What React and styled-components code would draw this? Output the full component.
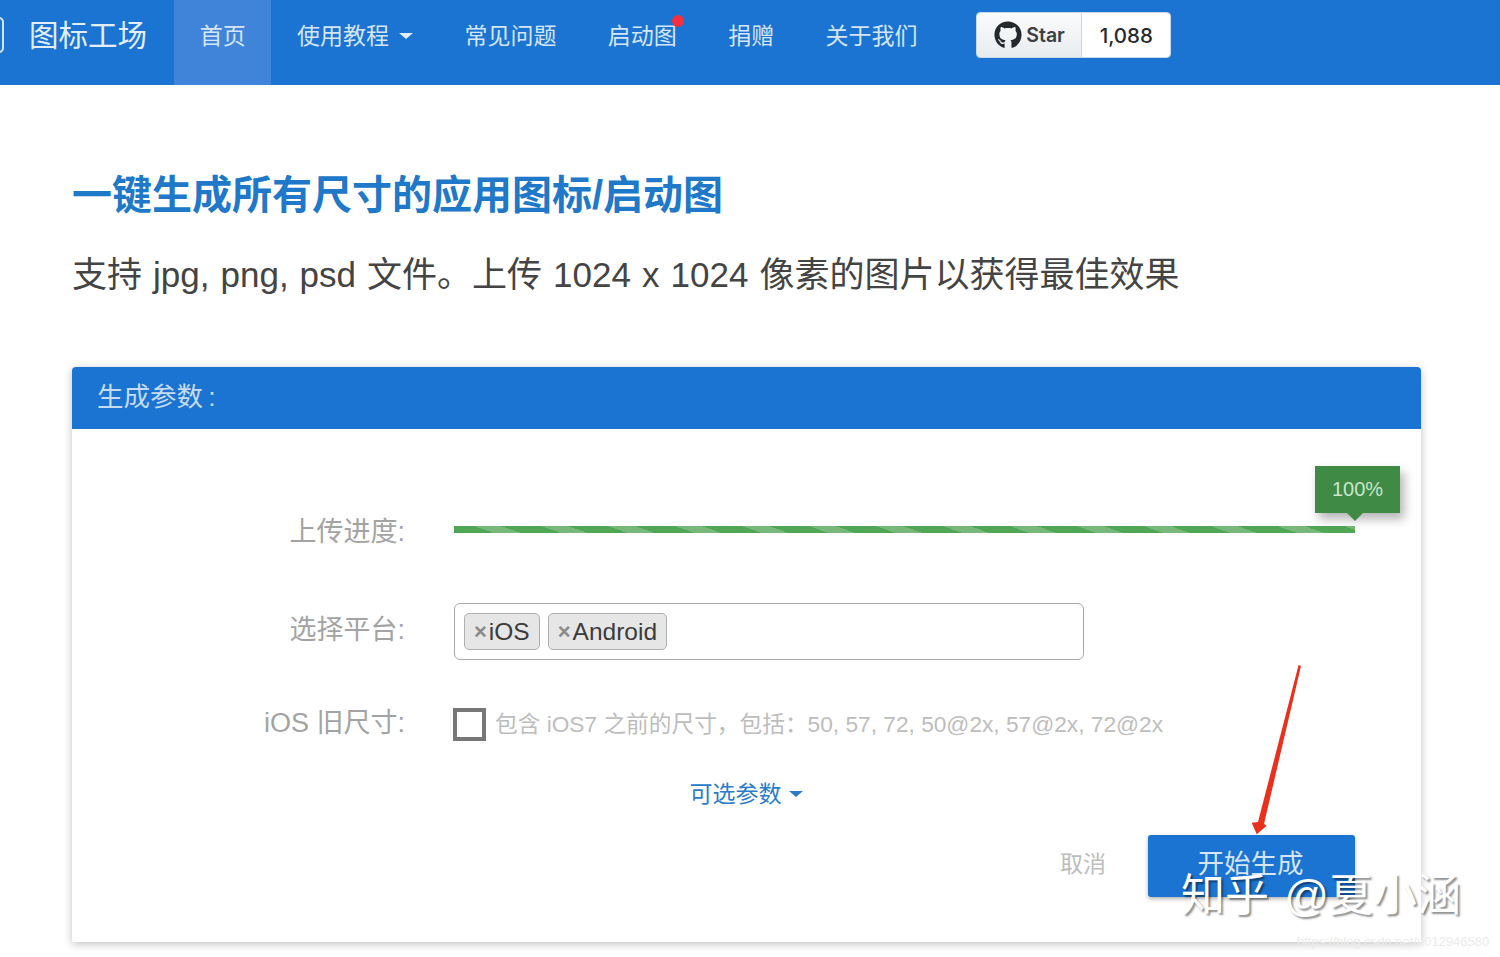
import React from 'react';
import styled, { createGlobalStyle } from 'styled-components';
import { FaGithub } from 'react-icons/fa';

const BLUE = '#1b74d1';
const FONT = '"Liberation Sans", "Noto Sans CJK SC", sans-serif';

const GlobalStyle = createGlobalStyle`
  html, body {
    margin: 0;
    padding: 0;
    background: #fff;
    font-family: ${FONT};
  }
`;

const Page = styled.div`
  position: relative;
  width: 1500px;
  height: 957px;
  overflow: hidden;
  background: #fff;
`;

const Navbar = styled.header`
  display: flex;
  align-items: stretch;
  height: 85px;
  background: ${BLUE};
  color: #d5e5f7;
`;

const BrandIcon = styled.span`
  align-self: center;
  width: 30px;
  height: 36px;
  margin: -16px 4px 0 -26px;
  box-sizing: border-box;
  border: 2px solid #d5e5f7;
  border-radius: 5px;
`;

const Brand = styled.div`
  display: flex;
  align-items: center;
  height: 70px;
  margin-right: 27px;
  margin-left: 21px;
  padding-bottom: 4px;
  box-sizing: border-box;
  font-size: 29.5px;
  color: #e3eefa;
`;

const NavItem = styled.a`
  position: relative;
  display: flex;
  align-items: center;
  height: 85px;
  padding: 0 25.7px 17px;
  box-sizing: border-box;
  font-size: 23px;
  background: ${(p) => (p.$active ? '#3f84d9' : 'transparent')};
`;

const Caret = styled.i`
  display: inline-block;
  width: 0;
  height: 0;
  margin-left: ${(p) => p.$gap || 10}px;
  margin-top: 3px;
  border-left: 7px solid transparent;
  border-right: 7px solid transparent;
  border-top: 6px solid ${(p) => p.$color || '#e3eefa'};
`;

const RedDot = styled.span`
  position: absolute;
  top: 15px;
  right: 19px;
  width: 12px;
  height: 12px;
  border-radius: 50%;
  background: #f5303f;
`;

const StarGroup = styled.div`
  display: flex;
  align-self: flex-start;
  height: 46px;
  margin: 12px 0 0 33px;
  box-sizing: border-box;
  border-radius: 4px;
  overflow: hidden;
  border: 1px solid #c9d9ec;
  font-family: Inter, "Liberation Sans", sans-serif;
  font-size: 20.5px;
  color: #24292e;
`;

const StarButton = styled.div`
  display: flex;
  align-items: center;
  gap: 4px;
  width: 105px;
  padding-left: 17px;
  box-sizing: border-box;
  font-weight: 600;
  font-size: 19.5px;
  color: #3a4046;
  background: linear-gradient(#fafbfc, #e9ecef);
  border-right: 1px solid #d0d4d9;
`;

const StarCount = styled.div`
  display: flex;
  align-items: center;
  justify-content: center;
  flex: none;
  width: 88px;
  background: #fff;
  font-weight: 500;
`;

const Main = styled.main`
  padding: 86px 79px 0 72px;
`;

const Title = styled.h1`
  margin: 0;
  font-size: 40px;
  line-height: 48px;
  font-weight: 700;
  color: #2078c8;
`;

const Subtitle = styled.p`
  margin: 34px 0 0;
  font-size: 35px;
  word-spacing: 1.3px;
  line-height: 44px;
  color: #444;
`;

const Card = styled.section`
  margin-top: 70px;
  border-radius: 4px 4px 0 0;
  background: #fff;
  box-shadow: 0 2px 8px rgba(0, 0, 0, 0.25);
`;

const CardHeader = styled.div`
  display: flex;
  align-items: center;
  height: 62px;
  padding: 0 0 8px 25px;
  box-sizing: border-box;
  border-radius: 4px 4px 0 0;
  background: ${BLUE};
  color: #c6dbf4;
  font-size: 26.5px;
  white-space: pre;
`;

const CardBody = styled.div`
  padding: 81px 66px 45px 0;
`;

const Row = styled.div`
  display: grid;
  grid-template-columns: 333px 1fr;
  column-gap: 49px;
  align-items: center;
  margin-top: ${(p) => p.$top || 0}px;
`;

const Label = styled.label`
  padding: ${(p) => p.$pad || '0 0 2px'};
  text-align: right;
  font-size: 27px;
  line-height: 29px;
  color: #a3a3a3;
`;

const Track = styled.div`
  position: relative;
  height: 7px;
  margin-bottom: 2px;
  background: repeating-linear-gradient(19deg, #4fa654 0 13px, #78b97b 13px 21.8px);
`;

const Tooltip = styled.div`
  position: absolute;
  right: -45px;
  bottom: 20px;
  display: flex;
  align-items: center;
  justify-content: center;
  width: 85px;
  height: 47px;
  background: #3f8a45;
  color: #c9e6ca;
  font-size: 20px;
  box-shadow: 4px 6px 10px rgba(0, 0, 0, 0.3);

  &::after {
    content: '';
    position: absolute;
    left: 32px;
    top: 100%;
    border-left: 8px solid transparent;
    border-right: 8px solid transparent;
    border-top: 8px solid #3f8a45;
  }
`;

const ProgressField = styled.div`
  display: flex;
  flex-direction: column;
  justify-content: center;
  height: 40px;
`;

const Select = styled.div`
  display: flex;
  align-items: center;
  gap: 8px;
  width: 630px;
  height: 57px;
  padding-left: 9px;
  box-sizing: border-box;
  border: 1.5px solid #a8a8a8;
  border-radius: 6px;
`;

const Tag = styled.span`
  display: flex;
  align-items: center;
  height: 37px;
  padding: 0 9px;
  box-sizing: border-box;
  border: 1.5px solid #b0b0b0;
  border-radius: 5px;
  background: #e6e6e6;
  font-size: 24.5px;
  color: #3b3b3b;
`;

const TagRemove = styled.b`
  margin-right: 2px;
  font-size: 22px;
  color: #8a8a8a;
`;

const CheckLine = styled.div`
  display: flex;
  align-items: center;
  gap: 9px;
  margin-left: -1px;
  font-size: 22.7px;
  color: #bdbdbd;
`;

const Checkbox = styled.span`
  flex: none;
  width: 33px;
  height: 33px;
  box-sizing: border-box;
  border: 4px solid #777;
`;

const Hint = styled.span`
  line-height: 27px;
  white-space: nowrap;
`;

const OptionalToggle = styled.a`
  display: flex;
  align-items: center;
  justify-content: center;
  height: 30px;
  margin: 37px 0 0 65px;
  padding-bottom: 2px;
  box-sizing: border-box;
  font-size: 23px;
  color: #2a7bc8;
`;

const Actions = styled.div`
  display: flex;
  justify-content: flex-end;
  align-items: center;
  gap: 42px;
  margin-top: 27px;
`;

const CancelButton = styled.span`
  padding-bottom: 8px;
  font-size: 23px;
  color: #bdbdbd;
`;

const PrimaryButton = styled.span`
  display: flex;
  align-items: center;
  justify-content: center;
  width: 207px;
  height: 62px;
  padding: 0 2px 10px 0;
  box-sizing: border-box;
  border-radius: 3px;
  background: ${BLUE};
  color: #d5e5f7;
  font-size: 26.5px;
  box-shadow: 0 2px 4px rgba(0, 0, 0, 0.3);
`;

const ArrowMark = styled.svg`
  position: absolute;
  left: 1250px;
  top: 660px;
`;

const Watermark = styled.div`
  position: absolute;
  left: 1181px;
  top: 866px;
  font-size: 44px;
  word-spacing: 3px;
  line-height: 60px;
  white-space: nowrap;
  color: #fff;
  text-shadow: 2px 2px 2px rgba(0, 0, 0, 0.45);
`;

const SourceMark = styled.div`
  position: absolute;
  left: 1297px;
  top: 934px;
  font-size: 13px;
  color: #ececec;
  white-space: nowrap;
`;

const navItems = ['常见问题', '启动图', '捐赠', '关于我们'];

export default function App() {
  return (
    <Page>
      <GlobalStyle />
      <Navbar>
        <BrandIcon />
        <Brand>图标工场</Brand>
        <NavItem $active>首页</NavItem>
        <NavItem>
          使用教程
          <Caret />
        </NavItem>
        {navItems.map((item) => (
          <NavItem key={item}>
            {item}
            {item === '启动图' && <RedDot />}
          </NavItem>
        ))}
        <StarGroup>
          <StarButton>
            <FaGithub size={28} color="#24292e" />
            Star
          </StarButton>
          <StarCount>1,088</StarCount>
        </StarGroup>
      </Navbar>

      <Main>
        <Title>一键生成所有尺寸的应用图标/启动图</Title>
        <Subtitle>支持 jpg, png, psd 文件。上传 1024 x 1024 像素的图片以获得最佳效果</Subtitle>

        <Card>
          <CardHeader>生成参数{'\u2009'}:</CardHeader>
          <CardBody>
            <Row>
              <Label $pad="4px 0 0">上传进度:</Label>
              <ProgressField>
                <Track>
                  <Tooltip>100%</Tooltip>
                </Track>
              </ProgressField>
            </Row>
            <Row $top={53}>
              <Label>选择平台:</Label>
              <Select>
                <Tag>
                  <TagRemove>×</TagRemove>iOS
                </Tag>
                <Tag>
                  <TagRemove>×</TagRemove>Android
                </Tag>
              </Select>
            </Row>
            <Row $top={48}>
              <Label>iOS 旧尺寸:</Label>
              <CheckLine>
                <Checkbox />
                <Hint>包含 iOS7 之前的尺寸{'\uFF0C'}包括{'\uFF1A'}50, 57, 72, 50@2x, 57@2x, 72@2x</Hint>
              </CheckLine>
            </Row>
            <OptionalToggle>
              可选参数
              <Caret $gap={7} $color="#2a7bc8" />
            </OptionalToggle>
            <Actions>
              <CancelButton>取消</CancelButton>
              <PrimaryButton>开始生成</PrimaryButton>
            </Actions>
          </CardBody>
        </Card>
      </Main>

      <ArrowMark width="60" height="180" viewBox="0 0 60 180">
        <polygon points="48.6,5 51,6 14,164 16.7,165.7 6.7,174.3 1.7,162.7 8,162" fill="#e8301c" />
      </ArrowMark>
      <Watermark>知乎 @夏小涵</Watermark>
      <SourceMark>https://blog.csdn.net/u012946580</SourceMark>
    </Page>
  );
}
